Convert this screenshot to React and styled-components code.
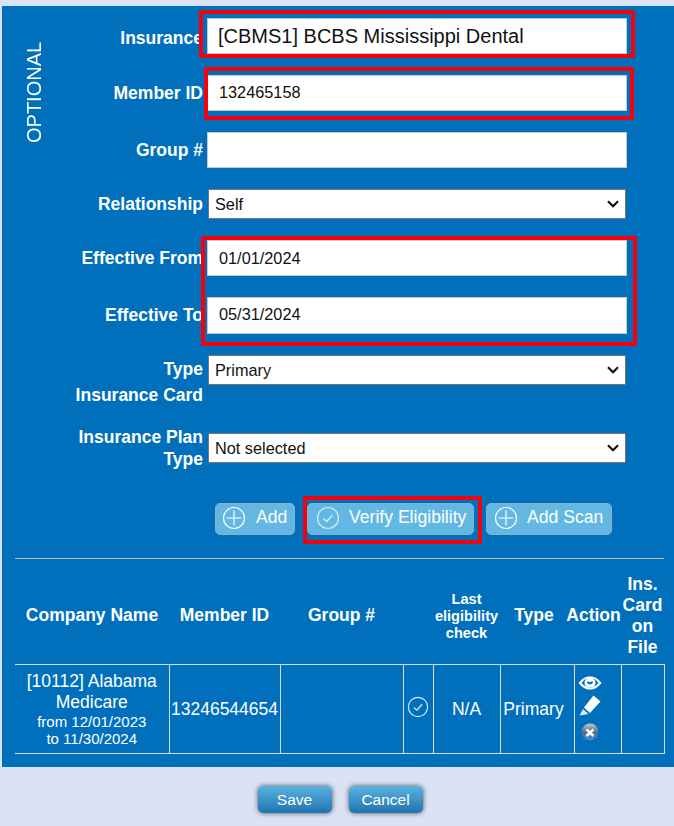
import React from "react";
import styled, { createGlobalStyle } from "styled-components";

const Global = createGlobalStyle`
  html, body { margin: 0; padding: 0; background: #dae3f3; }
  body { font-family: "Liberation Sans", Arial, sans-serif; }
  * { box-sizing: border-box; }
`;

const Page = styled.div`
  position: relative;
  width: 674px;
  height: 826px;
  padding: 6px 0 0 2px;
  overflow: hidden;
`;
const Panel = styled.div`
  height: 761px;
  background: #0070bc;
  color: #fff;
  padding-top: 12px;
`;
const FormArea = styled.div`
  display: flex;
`;
const Side = styled.div`
  flex: 0 0 58px;
  padding: 24px 0 0 22px;
`;
const Optional = styled.div`
  writing-mode: vertical-rl;
  transform: rotate(180deg);
  font-size: 20px;
  line-height: 20px;
  height: 101px;
`;
const Rows = styled.div`
  display: flex;
  flex-direction: column;
  gap: 21px;
`;
const Row = styled.div`
  display: grid;
  grid-template-columns: 143px auto;
  column-gap: 4px;
  align-items: center;
`;
const TallRow = styled(Row)`
  align-items: start;
  height: 50px;
`;
const PlanRow = styled(Row)`
  height: 44px;
`;
const Label = styled.label`
  font-size: 17.5px;
  line-height: 22px;
  font-weight: 700;
  text-align: right;
  white-space: pre-line;
  padding: ${(p) => p.$pad || "0"};
`;
const WideLabel = styled(Label)`
  line-height: 26px;
  padding-top: 1px;
`;
const TextBox = styled.div`
  width: 420px;
  height: ${(p) => p.$h || 36}px;
  background: #fff;
  border: 1px solid #c8c8c8;
  color: #111;
  font-size: 16.3px;
  line-height: ${(p) => p.$lh || 33}px;
  padding-left: 11px;
`;
const LargeTextBox = styled(TextBox)`
  font-size: 20px;
  line-height: 35px;
  padding-left: 10px;
`;
const SelectBox = styled.div`
  display: flex;
  align-items: center;
  justify-content: space-between;
  width: 418px;
  height: 30px;
  margin-left: 1px;
  background: #fff;
  border: 1px solid #767676;
  color: #111;
  font-size: 16.3px;
  padding: 0 6px;
`;
const ButtonBar = styled.div`
  display: flex;
  gap: 12px;
  padding-left: 213px;
  margin-top: 33px;
`;
const IconButton = styled.div`
  display: flex;
  align-items: center;
  width: ${(p) => p.$w}px;
  height: 32px;
  background: #62b8e2;
  border: 1px solid #8fb0c4;
  border-radius: 5px;
  font-size: 17.6px;
  color: #fff;
  padding: 0 0 3px ${(p) => p.$pl}px;
  gap: ${(p) => p.$gap}px;
  white-space: nowrap;
`;
const Divider = styled.div`
  height: 1px;
  background: #c3c3b0;
  margin: 23px 10px 0 13px;
`;
const DataTable = styled.table`
  width: 649px;
  margin: 11px 0 0 13px;
  border-collapse: collapse;
  table-layout: fixed;
`;
const Head = styled.th`
  height: 94px;
  padding: ${(p) => p.$pad || "0 0 2px"};
  font-size: 17.5px;
  line-height: 21px;
  font-weight: 700;
  text-align: center;
`;
const SmallHead = styled(Head)`
  font-size: 14.6px;
  line-height: 17px;
`;
const OverflowLabel = styled.span`
  display: inline-block;
  margin-left: -8px;
`;
const Cell = styled.td`
  height: 89px;
  padding: ${(p) => p.$pad || "0"};
  font-size: 17.5px;
  line-height: 21px;
  text-align: center;
  border: 1px solid #dcdcdc;
  &:first-child { border-left: 0; }
`;
const SubLine = styled.div`
  font-size: 15px;
  line-height: 17px;
`;
const ActionIcons = styled.div`
  display: flex;
  flex-direction: column;
  align-items: center;
  gap: 5px;
`;
const Footer = styled.div`
  display: flex;
  justify-content: center;
  gap: 17px;
  padding: 19px 0 0 4px;
`;
const FooterButton = styled.div`
  width: 74px;
  height: 27px;
  border-radius: 5px;
  background: linear-gradient(#5cb2de, #1f74b0);
  box-shadow: 0 0 5px rgba(0, 0, 0, 0.65);
  color: #fff;
  font-size: 15.5px;
  line-height: 27px;
  text-align: center;
`;
const RedBox = styled.div`
  position: absolute;
  left: ${(p) => p.$x}px;
  top: ${(p) => p.$y}px;
  width: ${(p) => p.$w}px;
  height: ${(p) => p.$h}px;
  border: 4px solid #f4000f;
  border-radius: 2px;
  pointer-events: none;
`;

const Chevron = () => (
  <svg width="12" height="8" viewBox="0 0 12 8" fill="none" stroke="#111" strokeWidth="2.2">
    <path d="M1 1.3 6 6.3 11 1.3" />
  </svg>
);
const PlusCircle = () => (
  <svg width="24" height="24" viewBox="0 0 24 24" fill="none" stroke="#fff" strokeWidth="1.2">
    <circle cx="12" cy="12" r="10.5" />
    <path d="M12 4.5v15M4.5 12h15" />
  </svg>
);
const CheckCircle = ({ size = 24, color = "#d8eef8" }) => (
  <svg width={size} height={size} viewBox="0 0 24 24" fill="none" stroke={color} strokeWidth="1.2">
    <circle cx="12" cy="12" r="10.5" />
    <path d="M7.5 12.5 10.8 15.5 16.5 9" strokeWidth="1.3" />
  </svg>
);
const Eye = () => (
  <svg width="24" height="14" viewBox="0 0 24 15" preserveAspectRatio="none">
    <path d="M0.5 7.5C4 2.5 8 0.5 12 0.5s8 2 11.5 7C20 12.5 16 14.5 12 14.5S4 12.5 0.5 7.5Z" fill="#fff" />
    <path d="M3.5 7.5C6 4.2 8 3 9 2.8a5.5 5.5 0 1 0 6 0c1 .2 3 1.4 5.5 4.7-2.5 3.3-5.5 5-8.5 5s-6-1.7-8.5-5Z" fill="#0070bc" />
    <circle cx="12" cy="7" r="4" fill="#fff" />
    <path d="M8.8 6.5a3.3 3.3 0 0 0 6.4 0l-1.5-1a2 2 0 0 1-3.4 0Z" fill="#0070bc" />
  </svg>
);
const Pencil = () => (
  <svg width="22" height="23" viewBox="0 0 22 23">
    <path d="M14.5 0.5 21.5 6.5 11 18 5 12.5Z" fill="#fff" />
    <path d="M4 14 9.5 19 0.5 20.5Z" fill="#dcecf5" />
  </svg>
);
const RemoveBall = () => (
  <svg width="18" height="18" viewBox="0 0 18 18">
    <defs>
      <linearGradient id="ball" x1="0" y1="0" x2="0" y2="1">
        <stop offset="0%" stopColor="#c4cacf" />
        <stop offset="50%" stopColor="#566c84" />
        <stop offset="100%" stopColor="#3a8ee0" />
      </linearGradient>
      <filter id="soft"><feGaussianBlur stdDeviation="0.6" /></filter>
    </defs>
    <g filter="url(#soft)">
      <circle cx="9" cy="9" r="8.5" fill="url(#ball)" />
      <path d="M5.5 6.5 12.5 13M12.5 6.5 5.5 13" stroke="#fff" strokeWidth="2.4" />
    </g>
  </svg>
);

const widths = [154, 111, 123, 30, 67, 74, 47, 43];

export default function App() {
  return (
    <Page>
      <Global />
      <Panel>
        <FormArea>
          <Side>
            <Optional>OPTIONAL</Optional>
          </Side>
          <Rows>
            <Row>
              <Label $pad="4px 0 0">Insurance</Label>
              <LargeTextBox>[CBMS1] BCBS Mississippi Dental</LargeTextBox>
            </Row>
            <Row>
              <Label>Member ID</Label>
              <TextBox>132465158</TextBox>
            </Row>
            <Row>
              <Label>Group #</Label>
              <TextBox />
            </Row>
            <Row>
              <Label>Relationship</Label>
              <SelectBox>Self<Chevron /></SelectBox>
            </Row>
            <Row>
              <Label>Effective From</Label>
              <TextBox $lh={35}>01/01/2024</TextBox>
            </Row>
            <Row>
              <Label $pad="0 0 2px">Effective To</Label>
              <TextBox $h={37}>05/31/2024</TextBox>
            </Row>
            <TallRow>
              <WideLabel>{"Type\nInsurance Card"}</WideLabel>
              <SelectBox>Primary<Chevron /></SelectBox>
            </TallRow>
            <PlanRow>
              <Label>{"Insurance Plan\nType"}</Label>
              <SelectBox>Not selected<Chevron /></SelectBox>
            </PlanRow>
          </Rows>
        </FormArea>
        <ButtonBar>
          <IconButton $w={80} $pl={6} $gap={10}><PlusCircle />Add</IconButton>
          <IconButton $w={167} $pl={8} $gap={9}><CheckCircle />Verify Eligibility</IconButton>
          <IconButton $w={126} $pl={7} $gap={9}><PlusCircle />Add Scan</IconButton>
        </ButtonBar>
        <Divider />
        <DataTable>
          <colgroup>
            {widths.map((w, i) => <col key={i} style={{ width: w }} />)}
          </colgroup>
          <thead>
            <tr>
              <Head>Company Name</Head>
              <Head>Member ID</Head>
              <Head>Group #</Head>
              <Head />
              <SmallHead $pad="0">Last eligibility check</SmallHead>
              <Head $pad="0 6px 2px 0">Type</Head>
              <Head><OverflowLabel>Action</OverflowLabel></Head>
              <Head>Ins. Card on File</Head>
            </tr>
          </thead>
          <tbody>
            <tr>
              <Cell>
                [10112] Alabama Medicare
                <SubLine>from 12/01/2023</SubLine>
                <SubLine>to 11/30/2024</SubLine>
              </Cell>
              <Cell $pad="2px 0 0">13246544654</Cell>
              <Cell />
              <Cell $pad="2px 0 0"><CheckCircle size={22} /></Cell>
              <Cell $pad="2px 0 0">N/A</Cell>
              <Cell $pad="2px 7px 0 0">Primary</Cell>
              <Cell $pad="0 16px 0 0">
                <ActionIcons><Eye /><Pencil /><RemoveBall /></ActionIcons>
              </Cell>
              <Cell />
            </tr>
          </tbody>
        </DataTable>
      </Panel>
      <Footer>
        <FooterButton>Save</FooterButton>
        <FooterButton>Cancel</FooterButton>
      </Footer>
      <RedBox $x={199} $y={10} $w={436} $h={48} />
      <RedBox $x={204} $y={67} $w={430} $h={53} />
      <RedBox $x={201} $y={236} $w={436} $h={110} />
      <RedBox $x={303} $y={496} $w={179} $h={48} />
    </Page>
  );
}
